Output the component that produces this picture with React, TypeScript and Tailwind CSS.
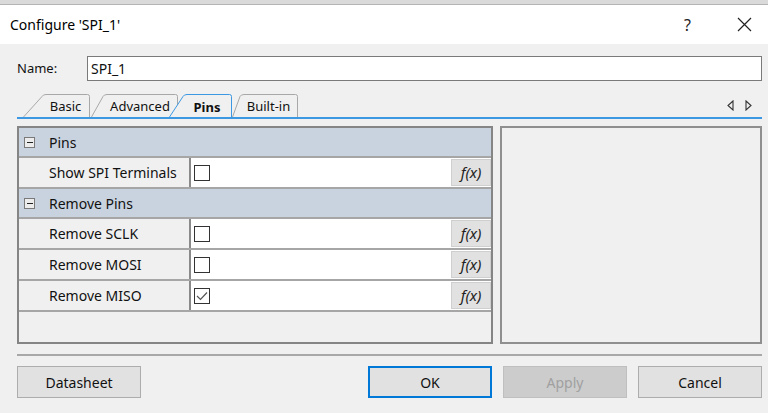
import React from "react";

const rows: { kind: "group" | "prop"; label: string; checked?: boolean }[] = [
  { kind: "group", label: "Pins" },
  { kind: "prop", label: "Show SPI Terminals", checked: false },
  { kind: "group", label: "Remove Pins" },
  { kind: "prop", label: "Remove SCLK", checked: false },
  { kind: "prop", label: "Remove MOSI", checked: false },
  { kind: "prop", label: "Remove MISO", checked: true },
];

type Tab = { label: string; width: number; slant: number; overlap: number; active?: boolean };

const tabs: Tab[] = [
  { label: "Basic", width: 68, slant: 19, overlap: 0 },
  { label: "Advanced", width: 88, slant: 12, overlap: 0 },
  { label: "Pins", width: 64, slant: 14, overlap: 10, active: true },
  { label: "Built-in", width: 67, slant: 8, overlap: 1 },
];

function TabShape({ width, slant, active }: { width: number; slant: number; active?: boolean }) {
  const h = 23;
  const d = `M0.5 ${h} L${slant} 2.5 Q${slant + 1} 0.5 ${slant + 4} 0.5 L${width - 3.5} 0.5 Q${width - 1.5} 0.5 ${width - 1.5} 2.5 L${width - 1.5} ${h}`;
  return (
    <svg className="absolute inset-0" width={width} height={h} viewBox={`0 0 ${width} ${h}`}>
      <path d={d} fill="#f0f0f0" stroke={active ? "#3c98e2" : "#a8a8a8"} strokeWidth="1" />
    </svg>
  );
}

function Checkbox({ checked }: { checked?: boolean }) {
  return (
    <div className="flex h-[16px] w-[16px] items-center justify-center border border-[#333333] bg-white">
      {checked && (
        <svg width="12" height="10" viewBox="0 0 12 10">
          <path d="M1 5 L4.5 8.5 L11 1.5" fill="none" stroke="#555555" strokeWidth="1.2" />
        </svg>
      )}
    </div>
  );
}

function WinButton({ label, variant }: { label: string; variant?: "default" | "disabled" }) {
  return (
    <button
      className={
        variant === "default"
          ? "flex h-[32px] w-[124px] items-center justify-center border-2 border-[#0078d7] bg-[#e1e1e1] text-[14px] text-[#111]"
          : variant === "disabled"
            ? "flex h-[32px] w-[124px] items-center justify-center border border-[#bfbfbf] bg-[#cccccc] text-[14px] text-[#a0a0a0]"
            : "flex h-[32px] w-[124px] items-center justify-center border border-[#adadad] bg-[#e1e1e1] text-[14px] text-[#111]"
      }
    >
      {label}
    </button>
  );
}

export default function App() {
  return (
    <div
      className="flex h-[413px] w-[768px] flex-col overflow-hidden bg-[#f0f0f0] text-[#111]"
      style={{ fontFamily: '"Noto Sans", "Open Sans", sans-serif' }}
    >
      <div className="h-[5px] border-b border-[#b4b4b4] bg-[#dadada]" />
      <div className="flex h-[39px] items-center bg-white pl-[10px] pr-[16px]">
        <span className="text-[14px] text-black">Configure 'SPI_1'</span>
        <span className="ml-auto mr-[46px] text-[16px] text-[#222]">?</span>
        <svg width="15" height="15" viewBox="0 0 15 15">
          <path d="M1 1 L14 14 M14 1 L1 14" stroke="#222" strokeWidth="1.2" />
        </svg>
      </div>

      <div className="flex flex-1 flex-col pl-[17px] pr-[6px]">
        <div className="mt-[12px] flex items-center">
          <span className="w-[70px] text-[13px]">Name:</span>
          <div className="flex h-[25px] flex-1 items-center border border-[#7a7a7a] bg-white px-[3px] text-[14px]">
            SPI_1
          </div>
        </div>

        <div className="mt-[14px] flex h-[24px] items-end border-b-2 border-[#3c98e2] pl-[6px]">
          {tabs.map((t) => (
            <div
              key={t.label}
              className={`relative h-[23px] shrink-0 ${t.active ? "z-10 mb-[-2px] h-[25px]" : ""}`}
              style={{ width: t.width, marginLeft: -t.overlap }}
            >
              <TabShape width={t.width} slant={t.slant} active={t.active} />
              <span
                className={`absolute inset-y-0 right-[2px] flex items-center justify-center pt-[2px] text-[13px] ${t.active ? "font-bold" : ""}`}
                style={{ left: t.slant }}
              >
                {t.label}
              </span>
            </div>
          ))}
          <div className="ml-auto mb-[6px] flex items-center gap-[11px] pr-[10px]">
            <svg width="7" height="11" viewBox="0 0 7 11">
              <path d="M6 1 L1 5.5 L6 10 Z" fill="none" stroke="#333" strokeWidth="1.1" />
            </svg>
            <svg width="7" height="11" viewBox="0 0 7 11">
              <path d="M1 1 L6 5.5 L1 10 Z" fill="none" stroke="#333" strokeWidth="1.1" />
            </svg>
          </div>
        </div>

        <div className="mt-[7px] flex h-[218px] gap-[7px]">
          <div className="flex w-[476px] shrink-0 flex-col border-2 border-[#858585] bg-[#f0f0f0]">
            {rows.map((r) =>
              r.kind === "group" ? (
                <div
                  key={r.label}
                  className="flex h-[30px] items-center border-b-2 border-[#a6a6a6] bg-[#c9d3df]"
                >
                  <div className="ml-[5px] flex h-[11px] w-[11px] items-center justify-center border border-[#7a7a7a] bg-[#ececec]">
                    <div className="h-[1px] w-[6px] bg-[#222]" />
                  </div>
                  <span className="ml-[14px] text-[14px]">{r.label}</span>
                </div>
              ) : (
                <div key={r.label} className="flex h-[31px] border-b-2 border-[#a6a6a6]">
                  <div className="flex w-[172px] items-center border-r-2 border-[#8a8a8a] pl-[30px] text-[14px]">
                    {r.label}
                  </div>
                  <div className="flex flex-1 items-center bg-white pl-[3px]">
                    <Checkbox checked={r.checked} />
                    <div className="ml-auto flex h-[27px] w-[40px] items-center justify-center border border-[#cfcfcf] bg-[#e1e1e1] text-[15px] italic text-[#222]">
                      f(x)
                    </div>
                  </div>
                </div>
              ),
            )}
          </div>
          <div className="flex-1 border-2 border-[#8f8f8f] bg-[#f0f0f0]" />
        </div>

        <div className="mt-[10px] h-[2px] bg-[#a8a8a8]" />

        <div className="mt-[10px] flex">
          <WinButton label="Datasheet" />
          <div className="ml-auto flex gap-[11px]">
            <WinButton label="OK" variant="default" />
            <WinButton label="Apply" variant="disabled" />
            <WinButton label="Cancel" />
          </div>
        </div>
      </div>
    </div>
  );
}
